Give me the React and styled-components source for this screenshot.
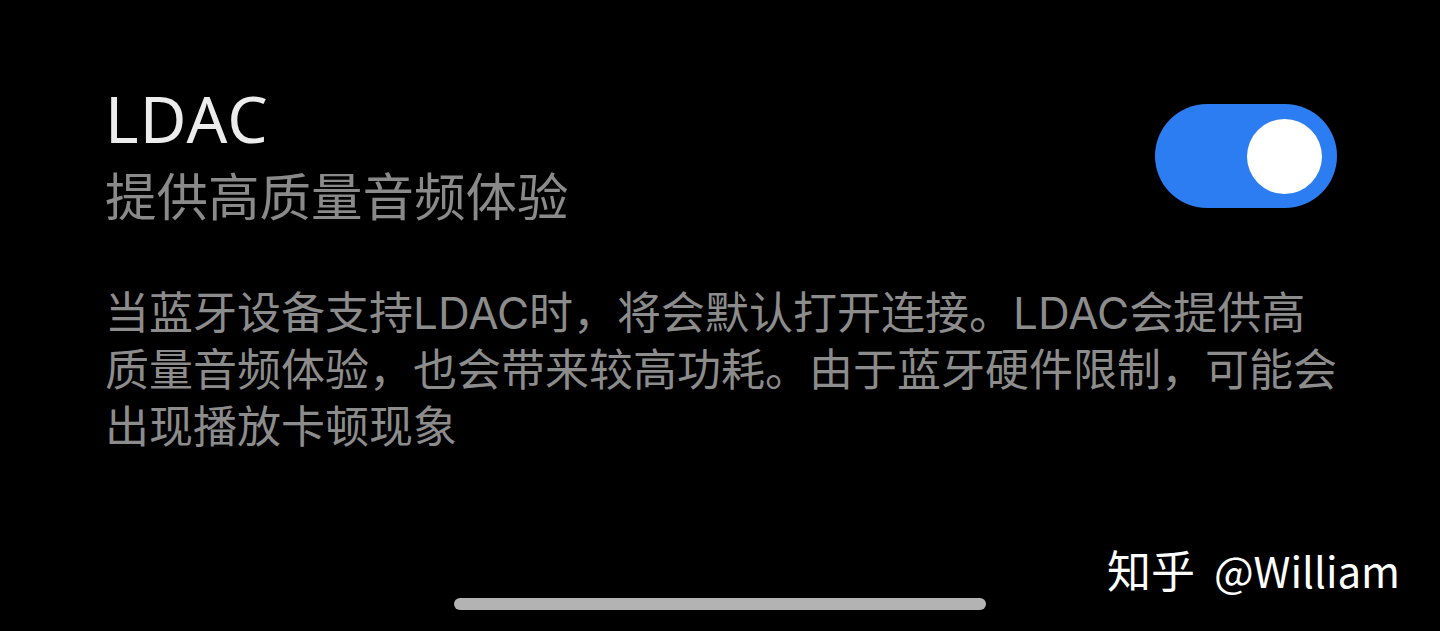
import React, { useState } from "react";
import styled, { createGlobalStyle } from "styled-components";

const Global = createGlobalStyle`
  html, body {
    margin: 0;
    padding: 0;
    background: #000;
  }
  body {
    font-family: "Noto Sans", "Noto Sans CJK SC", sans-serif;
    -webkit-font-smoothing: antialiased;
  }
`;

const Screen = styled.div`
  position: relative;
  width: 1440px;
  height: 631px;
  background: #000;
  display: flex;
  flex-direction: column;
  overflow: hidden;
`;

const Content = styled.div`
  padding: 81px 103px 0 105px;
  display: flex;
  flex-direction: column;
`;

const SettingRow = styled.div`
  display: flex;
  justify-content: space-between;
  align-items: flex-start;
`;

const Labels = styled.div`
  display: flex;
  flex-direction: column;
`;

const Title = styled.div`
  font-family: "Noto Sans", sans-serif;
  font-size: 64px;
  line-height: 76px;
  color: #ececec;
  letter-spacing: 1.2px;
`;

const Subtitle = styled.div`
  font-family: "Noto Sans CJK SC", sans-serif;
  font-size: 51.5px;
  line-height: 68px;
  color: #8a8a8a;
  margin-top: 3px;
`;

const Track = styled.button`
  width: 182px;
  height: 104px;
  border: none;
  border-radius: 52px;
  padding: 0;
  margin-top: 23px;
  background: ${(p) => (p.$on ? "#2b7df1" : "#3a3a3a")};
  display: flex;
  align-items: center;
  justify-content: ${(p) => (p.$on ? "flex-end" : "flex-start")};
  cursor: pointer;
`;

const Knob = styled.span`
  width: 75px;
  height: 75px;
  border-radius: 50%;
  background: #fff;
  margin: 0 15px;
`;

const Description = styled.p`
  margin: 57px 0 0;
  width: 1234px;
  font-family: "Inter", "Noto Sans CJK SC", sans-serif;
  font-size: 44px;
  line-height: 57px;
  color: #8c8c8c;
`;

const HomeBar = styled.div`
  margin: auto auto 21px;
  width: 532px;
  height: 12px;
  border-radius: 6px;
  background: #b3b3b3;
`;

const Watermark = styled.div`
  position: absolute;
  right: 40px;
  top: 543px;
  display: flex;
  align-items: baseline;
  gap: 19px;
  font-family: "Noto Sans CJK SC", sans-serif;
  line-height: 52px;
  color: #fff;
  white-space: nowrap;
`;

const Brand = styled.span`
  font-size: 44px;
`;

const Handle = styled.span`
  font-size: 42px;
`;

export default function App() {
  const [on, setOn] = useState(true);
  return (
    <>
      <Global />
      <Screen>
        <Content>
          <SettingRow>
            <Labels>
              <Title>LDAC</Title>
              <Subtitle>提供高质量音频体验</Subtitle>
            </Labels>
            <Track $on={on} onClick={() => setOn(!on)} aria-label="LDAC">
              <Knob />
            </Track>
          </SettingRow>
          <Description>
            当蓝牙设备支持LDAC时，将会默认打开连接。LDAC会提供高质量音频体验，也会带来较高功耗。由于蓝牙硬件限制，可能会出现播放卡顿现象
          </Description>
        </Content>
        <HomeBar />
        <Watermark>
          <Brand>知乎</Brand>
          <Handle>@William</Handle>
        </Watermark>
      </Screen>
    </>
  );
}
